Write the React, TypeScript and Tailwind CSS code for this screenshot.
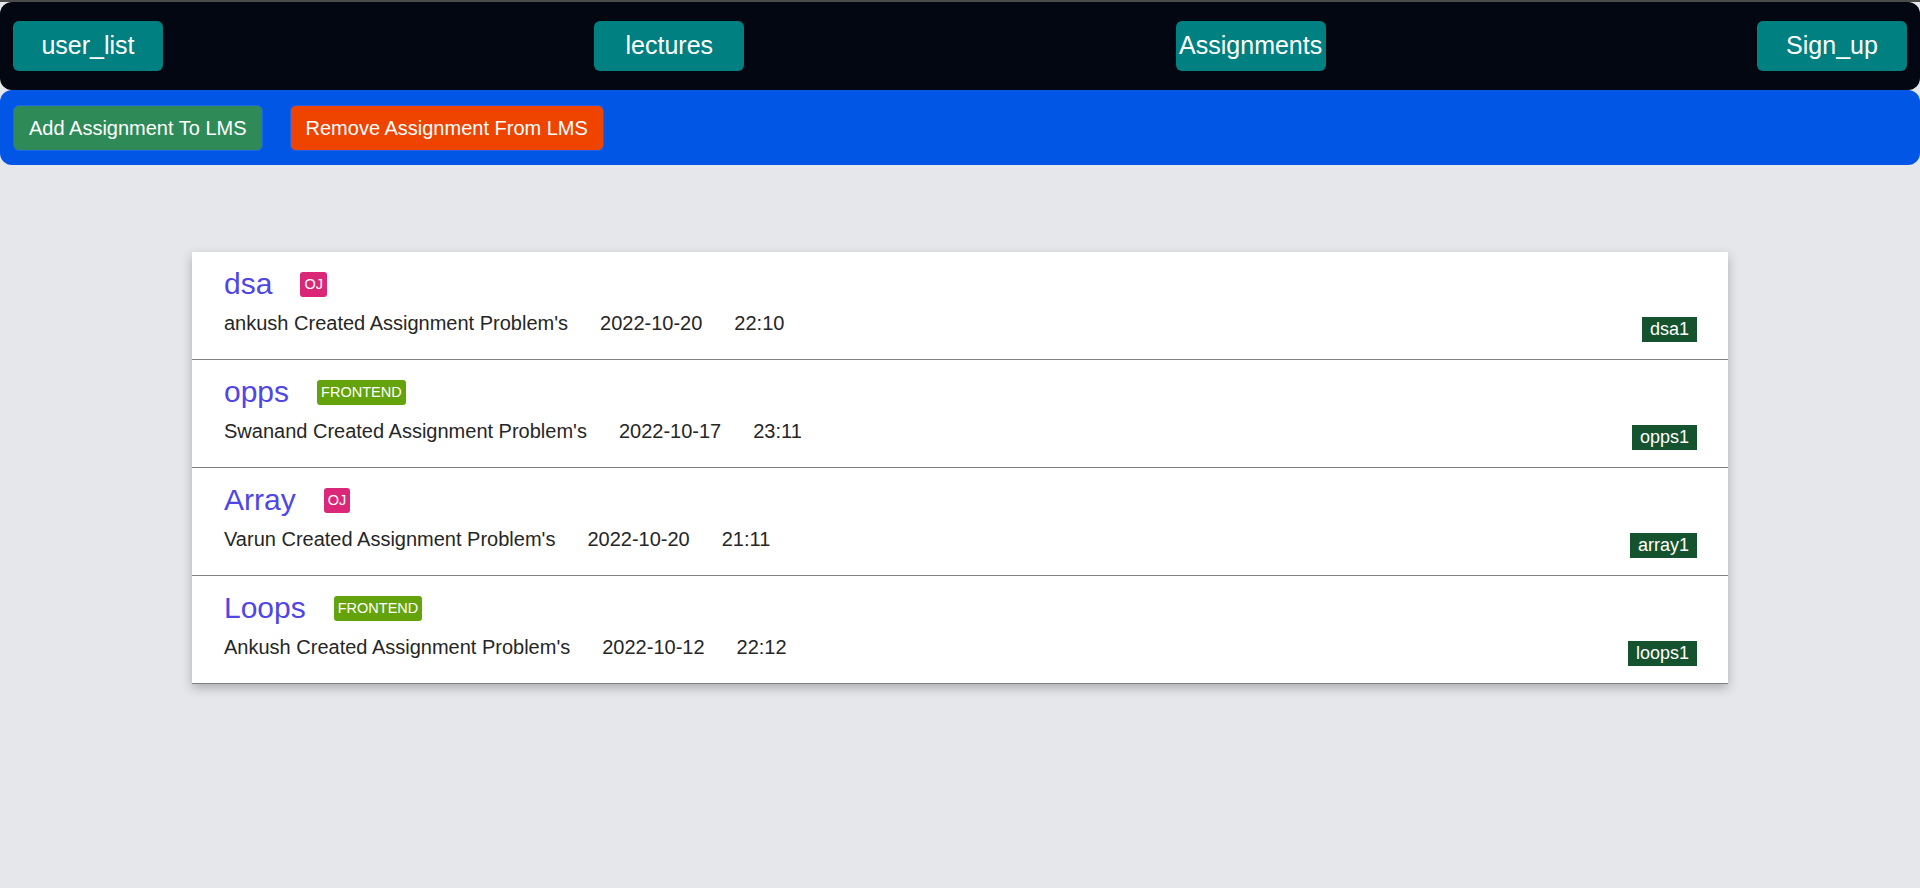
import React from "react";

const navItems = ["user_list", "lectures", "Assignments", "Sign_up"];

type Row = {
  title: string;
  badge: string;
  badgeColor: string;
  author: string;
  date: string;
  time: string;
  tag: string;
};

const rows: Row[] = [
  { title: "dsa", badge: "OJ", badgeColor: "bg-[#db2777]", author: "ankush", date: "2022-10-20", time: "22:10", tag: "dsa1" },
  { title: "opps", badge: "FRONTEND", badgeColor: "bg-[#65a30d]", author: "Swanand", date: "2022-10-17", time: "23:11", tag: "opps1" },
  { title: "Array", badge: "OJ", badgeColor: "bg-[#db2777]", author: "Varun", date: "2022-10-20", time: "21:11", tag: "array1" },
  { title: "Loops", badge: "FRONTEND", badgeColor: "bg-[#65a30d]", author: "Ankush", date: "2022-10-12", time: "22:12", tag: "loops1" },
];

export default function App() {
  return (
    <div className="min-h-screen bg-[#e5e7eb] font-['Liberation_Sans',Arial,sans-serif]">
      <div className="h-[2px] bg-[#4b4b4b]" />
      <nav className="flex h-[88px] items-center justify-between rounded-xl bg-[#030712] px-[13px]">
        {navItems.map((n) => (
          <button
            key={n}
            className="flex h-[50px] w-[150px] items-center justify-center rounded-md bg-[#008080] text-[25px] text-white"
          >
            {n}
          </button>
        ))}
      </nav>
      <div className="flex h-[75px] items-center gap-[27px] rounded-xl bg-[#0156e6] px-[13px]">
        <button className="h-[46px] rounded-md border border-[#1f66ea] bg-[#2e8b57] px-[15px] text-xl text-white">
          Add Assignment To LMS
        </button>
        <button className="h-[46px] rounded-md border border-[#2a5fe0] bg-[#ee4400] px-[15px] text-xl text-white">
          Remove Assignment From LMS
        </button>
      </div>
      <div className="mx-auto mt-[87px] w-4/5 bg-white shadow-[0_4px_10px_rgba(0,0,0,0.25)]">
        {rows.map((r) => (
          <div key={r.title} className="border-b border-[#808080] pb-[17px] pl-8 pr-[31px] pt-[14px]">
            <div className="flex h-9 items-center">
              <span className="text-[30px] leading-9 text-[#4f46e5]">{r.title}</span>
              <span className={`ml-7 rounded-[3px] px-[4px] py-[2px] text-[14.5px] leading-[21px] text-white ${r.badgeColor}`}>
                {r.badge}
              </span>
            </div>
            <div className="mt-[7px] flex items-start justify-between">
              <div className="flex gap-8 text-xl leading-7 text-[#262626]">
                <span>{r.author} Created Assignment Problem's</span>
                <span>{r.date}</span>
                <span>{r.time}</span>
              </div>
              <span className="mt-2 bg-[#14532d] px-2 text-lg leading-[25px] text-white">{r.tag}</span>
            </div>
          </div>
        ))}
      </div>
    </div>
  );
}
